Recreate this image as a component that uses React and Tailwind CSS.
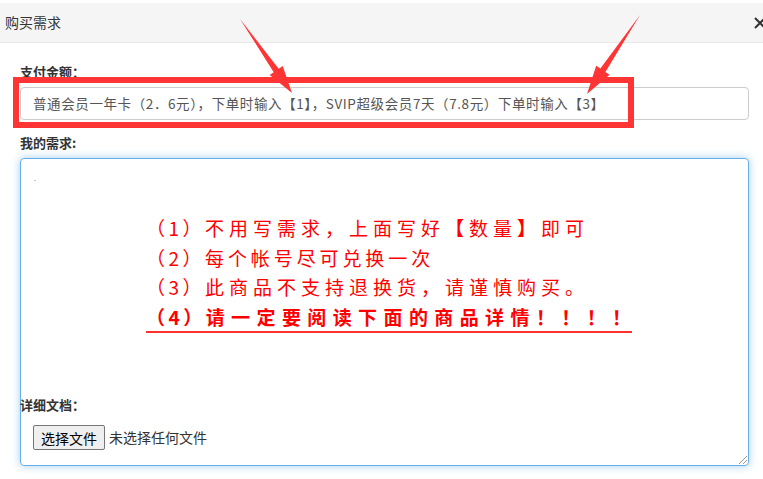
import React from 'react';

const Arrows = () => (
  <svg className="absolute inset-0 pointer-events-none" width="763" height="479" viewBox="0 0 763 479">
    <polygon fill="#ff3535" points="240,19 278.7,68.8 282.7,65.9 292,93 269.7,75.1 273.7,72.2" />
    <polygon fill="#ff3535" points="640,15 600.4,68.6 596.2,65.8 587,94 609.6,74.8 605.4,72" />
  </svg>
);

const Num = ({ children }) => <span className="tracking-[3.5px]">{children}</span>;

const App = () => {
  return (
    <div className="relative w-[763px] h-[479px] bg-white overflow-hidden font-['Noto_Sans_CJK_SC',sans-serif] text-[#333]">
      <div className="h-[3px]" />
      {/* header */}
      <div className="h-[40px] bg-[#f5f5f5] border-b border-[#e8e8e8] flex items-center pl-[5px] text-[14px]">
        购买需求
      </div>
      <svg className="absolute left-[754px] top-[17px]" width="12" height="12" viewBox="0 0 12 12">
        <path d="M1 1 L11 11 M11 1 L1 11" stroke="#333" strokeWidth="2" />
      </svg>

      <div className="pl-[20px] pr-[14px]">
        <div className="mt-[21px] text-[13px] font-bold leading-[16px]">支付金额：</div>
        <div className="mt-[7px] h-[33px] border border-[#ccc] rounded-[4px] flex items-center pl-[12px] text-[13.5px] tracking-[0.6px] text-[#555] whitespace-nowrap">
          普通会员一年卡（2．6元），下单时输入【1】，SVIP超级会员7天（7.8元）下单时输入【3】
        </div>
        <div className="mt-[15px] text-[13px] font-bold leading-[16px]">我的需求:</div>

        <div className="mt-[7px] h-[308px] border border-[#66afe9] rounded-[4px] shadow-[0_0_8px_rgba(102,175,233,0.6)] relative flex flex-col">
          <div className="w-[2px] h-[1px] bg-[#ccc] ml-[13px] mt-[21px]" />
          <div className="pl-[125px] pt-[32px] text-[19px] leading-[29.5px] text-[#ff0000] whitespace-nowrap">
            <div className="tracking-[5px]"><Num>（1）</Num>不用写需求，上面写好<span className="font-bold">【</span>数量<span className="font-bold">】</span>即可</div>
            <div className="tracking-[3.9px]"><Num>（2）</Num>每个帐号尽可兑换一次</div>
            <div className="tracking-[5px]"><Num>（3）</Num>此商品不支持退换货，请谨慎购买。</div>
            <div className="tracking-[6.4px] font-bold"><Num>（4）</Num>请一定要阅读下面的商品详情！！！！</div>
          </div>
          <div className="ml-[125px] w-[486px] h-[2px] bg-[#ff3030]" />
          <div className="-ml-px mt-[64px] text-[13px] font-bold leading-[16px]">详细文档：</div>
          <div className="mt-[12px] pl-[12px] flex items-center text-[14px]">
            <button className="h-[25px] w-[72px] bg-[#efefef] border border-[#767676] rounded-[2px] text-[14px] text-black leading-none">
              选择文件
            </button>
            <span className="ml-[4px] text-[#333]">未选择任何文件</span>
          </div>
          <svg className="absolute right-[1px] bottom-[1px]" width="9" height="9" viewBox="0 0 9 9">
            <path d="M9 1 L1 9 M9 5 L5 9" stroke="#999" strokeWidth="1" />
          </svg>
        </div>
      </div>

      <div className="absolute left-[13px] top-[77px] w-[621px] h-[51px] border-[6px] border-[#ff3535]" />
      <Arrows />
    </div>
  );
};

export default App;
